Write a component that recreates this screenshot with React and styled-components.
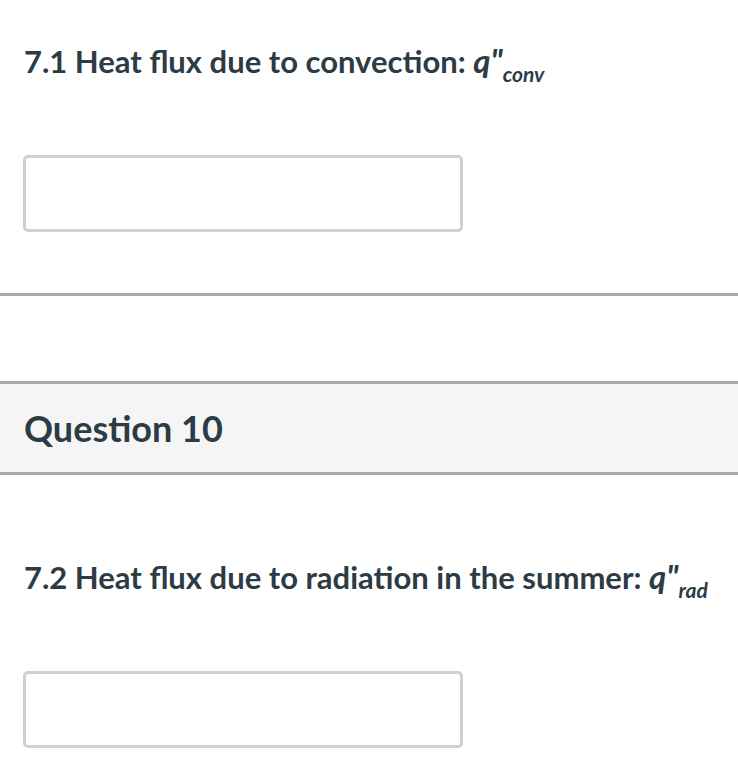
import styled, { createGlobalStyle } from 'styled-components';

const GlobalStyle = createGlobalStyle`
  body {
    margin: 0;
    background: #fff;
    font-family: Lato, "Noto Sans", sans-serif;
    color: #2d3b45;
  }
`;

const questions = [
  { id: 1, label: '7.1 Heat flux due to convection:', sub: 'conv' },
  { id: 2, label: '7.2 Heat flux due to radiation in the summer:', sub: 'rad' },
];

const QuestionBlock = ({ label, sub, top }) => (
  <Block $top={top}>
    <Prompt>
      {label} <Symbol>q"</Symbol>
      <Sub>{sub}</Sub>
    </Prompt>
    <AnswerBox type="text" aria-label={label} />
  </Block>
);

const App = () => (
  <Page>
    <GlobalStyle />
    <QuestionBlock {...questions[0]} top={43} />
    <Divider />
    <Header>
      <HeaderTitle>Question 10</HeaderTitle>
    </Header>
    <QuestionBlock {...questions[1]} top={84} />
  </Page>
);

export default App;

const Page = styled.div`
  width: 738px;
  height: 772px;
  overflow: hidden;
`;

const Block = styled.section`
  padding: ${p => p.$top}px 0 0 24px;
  display: flex;
  flex-direction: column;
  align-items: flex-start;
`;

const Prompt = styled.div`
  font-size: 31px;
  font-weight: 700;
  line-height: 36px;
  white-space: nowrap;
`;

const Symbol = styled.em`
  font-style: italic;
  font-size: 33px;
  line-height: 0;
`;

const Sub = styled.sub`
  font-size: 21px;
  font-style: italic;
  vertical-align: -9px;
  line-height: 0;
`;

const AnswerBox = styled.input`
  box-sizing: border-box;
  margin: 76px 0 0 -1px;
  width: 440px;
  height: 77px;
  border: 3px solid #d0d0d0;
  border-radius: 5px;
  background: #fff;
  outline: none;
`;

const Divider = styled.hr`
  margin: 61px 0 0;
  border: 0;
  height: 3px;
  background: #aaaaaa;
`;

const Header = styled.div`
  margin-top: 85px;
  height: 88px;
  border-top: 3px solid #aaaaaa;
  border-bottom: 3px solid #aaaaaa;
  background: #f5f5f5;
  display: flex;
  align-items: center;
  padding-left: 24px;
`;

const HeaderTitle = styled.h2`
  margin: 0;
  font-size: 36px;
  font-weight: 700;
  line-height: 40px;
`;
